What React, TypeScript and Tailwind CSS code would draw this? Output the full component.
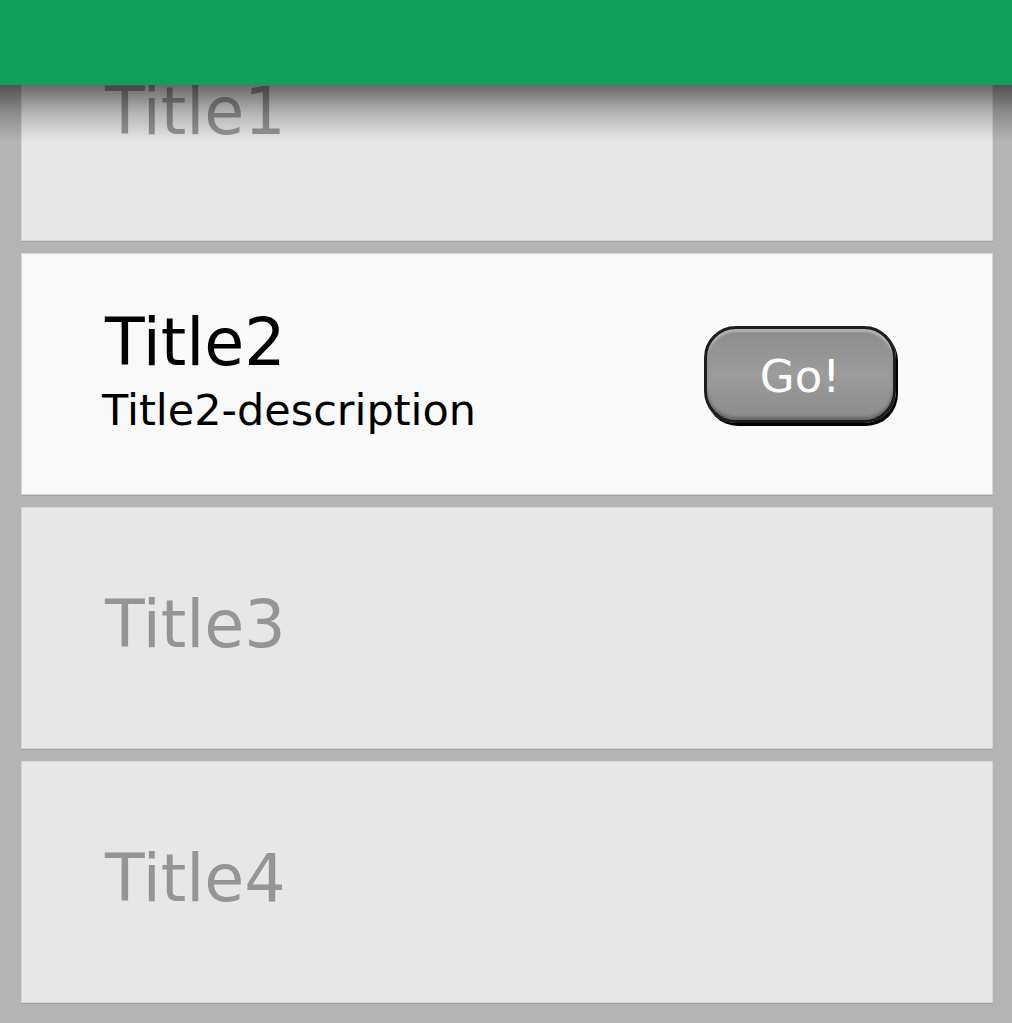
const items = [
  { id: 1, title: "Title1", description: "", active: false },
  { id: 2, title: "Title2", description: "Title2-description", active: true },
  { id: 3, title: "Title3", description: "", active: false },
  { id: 4, title: "Title4", description: "", active: false },
];

function GoButton() {
  return (
    <button className="h-[97px] w-[192px] rounded-[32px] border-[3px] border-[#1c1c1c] bg-gradient-to-b from-[#8c8c8c] via-[#9c9c9c] to-[#8a8a8a] pt-[4px] text-[45px] leading-none text-white shadow-[2px_3px_0_#000,inset_0_3px_2px_rgba(255,255,255,0.35),inset_0_-3px_3px_rgba(0,0,0,0.25)]">
      Go!
    </button>
  );
}

export default function App() {
  return (
    <div className="relative min-h-[1023px] overflow-hidden bg-[#b4b4b4] font-['DejaVu_Sans',sans-serif]">
      <div className="absolute inset-x-0 top-0 z-10">
        <div className="h-[85px] bg-[#129e5b]" />
        <div className="h-[56px] bg-gradient-to-b from-[rgba(0,0,0,0.55)] via-[rgba(0,0,0,0.22)] to-transparent" />
      </div>

      <ul className="-mt-px flex flex-col gap-3 pl-[21px] pr-[19px]">
        {items.map((item, i) => (
          <li
            key={item.id}
            className={
              "flex h-[242px] items-center justify-between border border-[#d4d4d4] pl-[83px] pr-[96px] shadow-[0_1px_0_rgba(0,0,0,0.1)] " +
              (item.active ? "bg-[#f9f9f9]" : "bg-[#e7e7e7]") +
              (i === 0 ? " pb-[16px]" : item.active ? "" : " pb-[6px]")
            }
          >
            <div className="flex flex-col">
              <span
                className={
                  "text-[65px] leading-[64px] " +
                  (item.active ? "text-black" : "text-[#959595]")
                }
              >
                {item.title}
              </span>
              {item.description && (
                <span className="mt-[7px] -ml-[3px] text-[43px] leading-[56px] text-black">
                  {item.description}
                </span>
              )}
            </div>
            {item.active && <GoButton />}
          </li>
        ))}
      </ul>
    </div>
  );
}
